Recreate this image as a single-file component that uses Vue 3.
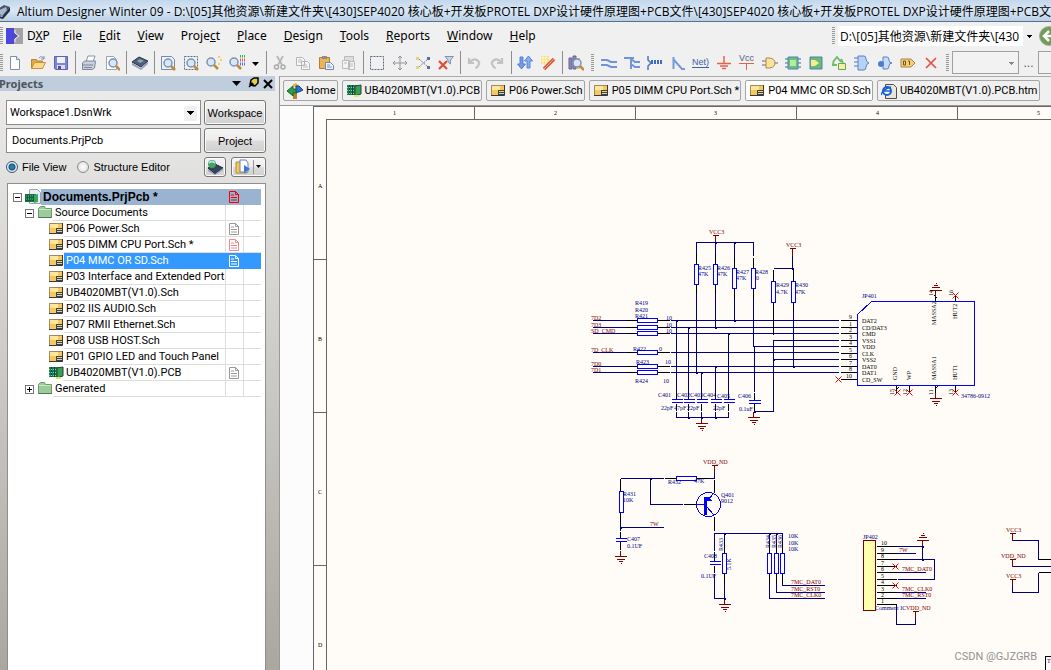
<script setup>
import { ref } from 'vue'

const title = 'Altium Designer Winter 09 - D:\\[05]其他资源\\新建文件夹\\[430]SEP4020 核心板+开发板PROTEL DXP设计硬件原理图+PCB文件\\[430]SEP4020 核心板+开发板PROTEL DXP设计硬件原理图+PCB文件'
const menus = [['D', 'X', 'P'], ['', 'F', 'ile'], ['', 'E', 'dit'], ['', 'V', 'iew'], ['Proje', 'c', 't'], ['', 'P', 'lace'], ['', 'D', 'esign'], ['', 'T', 'ools'], ['', 'R', 'eports'], ['', 'W', 'indow'], ['', 'H', 'elp']]

const lens = '<circle cx="7" cy="7" r="4" fill="#d5e7f8" stroke="#7e93b0" stroke-width="1.5"/><path d="M10 10l4 4" stroke="#c08a3c" stroke-width="2.5"/>'
const icons = {
  new: '<path d="M3.500 1.500h6l3 3v10h-9z" fill="#fff" stroke="#7d8fae"/><path d="M9.500 1.500v3h3" fill="#dfe7f3" stroke="#7d8fae"/>',
  open: '<path d="M1.500 13.500v-9h5l1 1.500h5v7.500z" fill="#e0a94a" stroke="#b98330"/><path d="M1.500 13.500l3-6h11l-3 6z" fill="#fad88c" stroke="#c8913b"/><path d="M9 3q3-3 5 1m0-3v3h-3" fill="none" stroke="#7590b8"/>',
  save: '<path d="M1.500 1.500h13v13h-12l-1-1z" fill="#7d86d8" stroke="#5b63b0"/><path d="M4 2h8v6H4z" fill="#eef0fa"/><path d="M4 10h8v4H4z" fill="#d8daf0"/><path d="M5 11h3v3H5z" fill="#4b559b"/>',
  print: '<path d="M5 7l2-6h7l-2 6z" fill="#fff" stroke="#8a93a6"/><path d="M1.500 8l2-2h11l-1 7-2 1.500h-10z" fill="#c9d0de" stroke="#7c869c"/><path d="M2 10h10M3 12.500h8" stroke="#7c869c"/>',
  preview: '<path d="M2.500 1.500h7l3 3v10h-10z" fill="#fff" stroke="#98a4b8"/><g transform="translate(2 1)">' + lens + '</g>',
  board: '<path d="M0 7l7-5 9 4-7 6z" fill="#4f5f76" stroke="#29374b"/><path d="M0 8v2l9 5 7-6V7l-7 6z" fill="#8ea0ba"/><path d="M5 6l3-2 4 2-4 2z" fill="#8ba4c4"/>',
  zoomdoc: '<path d="M1.500 1.500h10l3 3v10h-13z" fill="#edf3fa" stroke="#7589a9"/><g transform="translate(1 1)">' + lens + '</g>',
  zoomarea: '<path d="M1.500 1.500h13v13h-13z" fill="none" stroke="#5f6f8b" stroke-dasharray="2 1"/><g transform="translate(1 1)">' + lens + '</g>',
  zoomsel: '<g transform="translate(-2 0)">' + lens + '</g><path d="M12 1h2v2h-2zM14 4h2v2h-2zM12 8h2v2h-2z" fill="#ead55b"/>',
  zoomfilter: '<g transform="translate(-2 0)">' + lens + '</g><path d="M11 1h5" stroke="#30b050" stroke-width="3" stroke-dasharray="1 1"/><path d="M11 5h5" stroke="#e06060" stroke-width="3" stroke-dasharray="1 1"/><path d="M11 9h5" stroke="#6070e0" stroke-width="3" stroke-dasharray="1 1"/>',
  cut: '<path d="M5 1l5 9M11 1L6 10" stroke="#b5b5b5" stroke-width="1.700"/><circle cx="4.500" cy="12" r="2" fill="none" stroke="#aaa" stroke-width="1.500"/><circle cx="11" cy="12" r="2" fill="none" stroke="#aaa" stroke-width="1.500"/>',
  copy: '<path d="M1.500 2.500h6l2 2v6h-8zM6.500 6.500h6l2 2v6h-8z" fill="#f7f7f7" stroke="#b5b5b5"/><path d="M3 5h4M3 7h3M8 10h4M8 12h5" stroke="#bbb"/>',
  paste: '<path d="M1.500 2.500h10v11h-10z" fill="#e9b652" stroke="#b07f2d"/><path d="M4 1h5v3H4z" fill="#8c8c94"/><path d="M7.500 7.500h5l3 3v4h-8z" fill="#f1f5fc" stroke="#6d86b4"/><path d="M9 10h3M9 12h5" stroke="#7a93be"/>',
  paste2: '<path d="M3.500 1.500h9v10h-9z" fill="#ddd" stroke="#bbb"/><path d="M1.500 5.500h7v8h-7zM7.500 6.500h6v8h-6z" fill="#f4f4f4" stroke="#bbb"/><path d="M9 9h3M9 11h3M3 8h3" stroke="#bbb"/>',
  select: '<path d="M1.500 1.500h13v13h-13z" fill="none" stroke="#5c6880" stroke-dasharray="2 1"/>',
  move: '<path d="M8 1v14M1 8h14M6 3l2-2 2 2M6 13l2 2 2-2M3 6L1 8l2 2M13 6l2 2-2 2" fill="none" stroke="#8e96a3"/>',
  wires: '<path d="M4 4l9 8M4 12l9-8" stroke="#7381a0" stroke-dasharray="2 1"/><path d="M1 2h3v3H1zM1 11h3v3H1z" fill="#e2d678"/><path d="M12 2h3v3h-3zM12 11h3v3h-3z" fill="#5b6f98"/>',
  clear: '<path d="M1 6l8 8M9 6l-8 8" stroke="#e04c35" stroke-width="2.200"/><path d="M7 1.500h8.500L12.500 5v4L10 7V5z" fill="#c7d4e8" stroke="#7f93b4"/>',
  undo: '<path d="M3 3v5h5M3.500 7.500q4-5 8-2t-2 8" fill="none" stroke="#c2c2c2" stroke-width="2.200"/>',
  redo: '<path d="M13 3v5H8M12.500 7.500q-4-5-8-2t2 8" fill="none" stroke="#c2c2c2" stroke-width="2.200"/>',
  updown: '<path d="M3 2h3v7h2.500l-4 5-4-5H3z" fill="#6f9bea" stroke="#5a80d0"/><path d="M10 13h3V6h2.500l-4-5-4 5H10z" fill="#86b0f3" stroke="#5a80d0"/>',
  wand: '<path d="M1 1h8v8H1z" fill="#f8dc82"/><path d="M1 3h8M1 6h8M3 1v8M6 1v8" stroke="#fff6cc"/><path d="M4 14L14 4" stroke="#d5593c" stroke-width="3.500"/><path d="M4 14L14 4" stroke="#f6a184"/>',
  browse: '<path d="M1 3h3v11H1zM5 1h3v13H5z" fill="#8c84bd" stroke="#6a6296"/><path d="M9 3h3v11H9z" fill="#e6bd63"/><g transform="translate(2 1)">' + lens + '</g>',
  wire: '<path d="M0 5h6l4 2h6M0 10h6l4 2h6" fill="none" stroke="#6f94df" stroke-width="2"/>',
  bus: '<path d="M0 3h7M7 2v12M7 4l4 3h5M7 9l4 3h5M5 3h5" fill="none" stroke="#6f94df" stroke-width="2"/>',
  harness: '<path d="M1 1v4l3 3-3 3v4" fill="none" stroke="#4a75c0" stroke-width="1.500"/><path d="M4 8h12M4 6h12" stroke="#3d6cc8" stroke-width="2" stroke-dasharray="2 1"/>',
  entry: '<path d="M3.500 2v12M4 5l8 9h3" fill="none" stroke="#7499dd" stroke-width="2"/>',
  gnd: '<path d="M8 1v7M1 8.500h14M4 11h8M6 13.500h4" stroke="#e4624c" stroke-width="1.500"/>',
  gate: '<path d="M0 6h4M0 10h4M12 8h4" stroke="#5f6e87"/><path d="M4 3h4q5 1 5 5t-5 5H4z" fill="#ffe29a" stroke="#a9884a"/>',
  chip: '<path d="M0 4h3M0 8h3M0 12h3M13 4h3M13 8h3M13 12h3" stroke="#3d6a9c"/><path d="M3 2h10v12H3z" fill="#6bbf78" stroke="#4f80bd"/><path d="M5 5h6v6H5z" fill="#b5ec9d"/>',
  sheet: '<path d="M2 2h12v12H2z" fill="#6dba78" stroke="#4f80b0"/><path d="M3 5h4l4 3-4 3H3z" fill="#f4ee91"/>',
  device: '<path d="M2 7l4-5 4 5M10 4l2 4M1 10h5M2 7l1 4" fill="none" stroke="#70bd6b" stroke-width="2"/><path d="M7.500 8.500h7v6h-7z" fill="#f6f09a" stroke="#62a65f"/>',
  hconn: '<path d="M0 3h6M0 7h6M0 11h6" stroke="#4c78bd"/><path d="M6 1h4q2 0 2 3t3 4q-3 1-3 4t-2 3H4V1z" fill="#b6d2f6" stroke="#5c82bc"/>',
  hentry: '<path d="M6 2h4q2 0 2 3t3 3q-3 0-3 3t-2 3H6z" fill="#c6dcf8" stroke="#5c82bc"/><circle cx="4" cy="9" r="3" fill="#4d7bdc"/>',
  port: '<path d="M1 4h10l4 4-4 4H1z" fill="#f7ce78" stroke="#a98544"/><path d="M3.500 6h2v4h-2zM8 6h1.500v4" fill="none" stroke="#6d5428"/>',
  noerc: '<path d="M3 3l10 10M13 3L3 13" stroke="#e55242" stroke-width="1.700"/>',
  sch: '<path d="M1 2h14v11H1z" fill="#f6c95a"/><path d="M2 3h8v4H2z" fill="#fde79e"/><path d="M1.500 13V2.500h13" fill="none" stroke="#a08a58"/><path d="M14.500 2v10.500H1" fill="none" stroke="#3b3540"/><path d="M8 7h6v5H8z" fill="#34435c"/><path d="M9 8.500h5M9 10.500h5" stroke="#f6d36f"/>',
  pcb: '<path d="M1 2h10v10H1z" fill="#1f7a50"/><path d="M3.500 2v10M6.500 2v10" stroke="#123f3a"/><path d="M1 4.500h10M1 7.500h10M1 10.500h10" stroke="#7fd89b" stroke-dasharray="1 1"/><path d="M9 3l6-1v9l-6 2z" fill="#3f9b58" stroke="#174d2f"/><path d="M8 12h5v2H8z" fill="#d7ee5c"/>',
  project: '<path d="M4.500.5h8l3 3v11h-11z" fill="#e8eef7" stroke="#96a4ba"/><path d="M0 5h11v8H0z" fill="#167044"/><path d="M2 6v6M5 6v6M8 6v6" stroke="#0a3d31"/><path d="M1 7h9M1 10h9" stroke="#6ed28c" stroke-dasharray="1 1"/><path d="M9 6l4-1v8l-4 1z" fill="#3fa55a"/>',
  folder: '<path d="M1.500 12.500v-9l2-2h4l1 2h6v9z" fill="#9dcc9a" stroke="#6b9a6b"/><path d="M2 4.500h12" stroke="#c9e8c4"/><path d="M1 12.500h14" stroke="#4e7a50"/>',
  home: '<path d="M6 7h4v9H6z" fill="#b98224"/><path d="M0 8l6-5v3h4v4H6v3z" fill="#2c9b4a" stroke="#17672c"/><path d="M5 2l4-2 3 3-3 2z" fill="#e6b133"/><path d="M16 7l-4-4H9v6h3z" fill="#2c72c9" stroke="#174689"/>',
  html: '<path d="M4.500 1.500h8l3 3v11h-11z" fill="#e9e6d8" stroke="#504e48"/><circle cx="6" cy="8" r="4" fill="#fff" stroke="#1862cf" stroke-width="2"/><path d="M3 8h7M0 12q2-6 10-8" stroke="#1862cf" stroke-width="1.500" fill="none"/>',
  doc: '<path d="M3.500 2.500h6l3 3v8h-9zM9.500 2.500v3h3M5 6h3M5 8.500h6M5 11h6" fill="none" stroke="currentColor"/>',
  refresh: '<path d="M1 9l7-4 8 4-8 6z" fill="#33465c" stroke="#1d2838"/><path d="M1 10v2l7 4 8-5V9l-8 6z" fill="#8fa4bb"/><circle cx="5" cy="5" r="4" fill="#49a05b"/><path d="M2 4q3-3 6 0" stroke="#b5e1f7" stroke-width="2" fill="none"/>',
  folderview: '<path d="M1 3h5l1 2h5v9H1z" fill="#f5c658" stroke="#b98c37"/><path d="M5 1h6l2 3v9H5z" fill="#fff" stroke="#6785bd"/><path d="M9 6l6 4-6 4z" fill="#3a75d8"/>'
}

const bar = ['new', 'open', 'save', '|', 'print', 'preview', '|', 'board', '|', 'zoomdoc', 'zoomarea', 'zoomsel', 'zoomfilter', 'v', '|', 'cut', 'copy', 'paste', 'paste2', '|', 'select', 'move', 'wires', 'clear', '|', 'undo', 'redo', '|', 'updown', 'wand', '|', 'browse', ':', 'wire', 'bus', 'harness', 'entry', 'net', 'gnd', 'vcc', 'gate', 'chip', 'sheet', 'device', 'hconn', 'hentry', 'port', 'noerc', ':']

const view = ref('file')
const tabs = [
  ['home', 'Home'], ['pcb', 'UB4020MBT(V1.0).PCB'], ['sch', 'P06 Power.Sch'], ['sch', 'P05 DIMM CPU Port.Sch *'],
  ['sch', 'P04 MMC OR SD.Sch'], ['html', 'UB4020MBT(V1.0).PCB.htm']
]
const rows = [
  { t: 'Documents.PrjPcb *', i: 'project', l: 0, box: '-', mark: 'red', cls: 'root' },
  { t: 'Source Documents', i: 'folder', l: 1, box: '-' },
  { t: 'P06 Power.Sch', i: 'sch', l: 2, mark: 'gray' },
  { t: 'P05 DIMM CPU Port.Sch *', i: 'sch', l: 2, mark: 'pink' },
  { t: 'P04 MMC OR SD.Sch', i: 'sch', l: 2, mark: 'light', cls: 'active' },
  { t: 'P03 Interface and Extended Port.', i: 'sch', l: 2 },
  { t: 'UB4020MBT(V1.0).Sch', i: 'sch', l: 2 },
  { t: 'P02 IIS AUDIO.Sch', i: 'sch', l: 2 },
  { t: 'P07 RMII Ethernet.Sch', i: 'sch', l: 2 },
  { t: 'P08 USB HOST.Sch', i: 'sch', l: 2 },
  { t: 'P01 GPIO LED and Touch Panel', i: 'sch', l: 2 },
  { t: 'UB4020MBT(V1.0).PCB', i: 'pcb', l: 2, mark: 'gray' },
  { t: 'Generated', i: 'folder', l: 1, box: '+' }
]

/* Schematic geometry, in sheet units */
const wires = 'M696 253V242H753V255M715 242V253M734 242V257M696 293V372M715 293V327M734 298V320M753 298V346H838M792 255V268M773 268H793M793 311V366' +
  'M592 320H626M592 327H626M592 333H626M592 352H626M592 366H626M592 372H626M670 320H838M670 327H838M670 333H838M670 352H838M670 366H838M670 372H838' +
  'M676 320V392M688 327V392M701 372V392M715 366V392M728 333V392M676 411V417H728V411M688 411V417M701 411V417M715 411V417M754 346V391M754 411H773V340H838M773 359H838' +
  'M663 478H620M650 478V504H682M708 478H714V472M620 522V530M620 527H663M714 550V533H782V541M724 533V542M714 573V598H724V583M769 533V542M776 533V542' +
  'M769 583V598H824M776 583V592H824M782 583V585H824' +
  'M896 546H922V559M896 553H915M896 559H934V579H897M896 572H925M896 592H925M896 598H925M896 604V624H915V618M1012 540H1038V559M1012 566H1400M1012 585V592H1038V572'
const pins = 'M696 253V264M696 284V293M715 253V264M715 284V293M734 257V268M734 288V298M753 257V268M753 288V298M773 269V281M773 302V334M793 269V281M793 302V311' +
  [320, 327, 333, 352, 366, 372].map(y => `M626 ${y}H637M657 ${y}H669`).join('') +
  [676, 688, 701, 715, 728].map(x => `M${x} 392V399M${x} 403V410`).join('') +
  [320, 327, 333, 340, 346, 353, 359, 366, 372, 379].map(y => `M840 ${y}H857`).join('') +
  [546, 553, 559, 566, 572, 579, 585, 592, 598, 604].map(y => `M876 ${y}H896`).join('') +
  'M754 392V400M754 403V411M935 293V301M955 295V301M896 385V392M909 385V392M935 385V393M955 385V392M934 295l3 3M934 389l3-3M895 390l3-3' +
  'M620 478V491M620 512V522M620 531V538M620 541V549M664 478H676M696 478H708M683 504H695M714 479V492M714 516V530M714 551V561M714 565V572M724 542V553M724 573V583M769 542V553M776 542V553M782 541V553M769 573V583M776 573V583M782 573V583' +
  'M1038 559H1400M1038 572H1400M1045 1000V656H1400'
const parts = 'M694 264h4v20h-4zM713 264h4v20h-4zM732 268h4v20h-4zM751 268h4v20h-4zM771 281h4v21h-4zM791 281h4v21h-4z' +
  [320, 327, 333, 352, 366, 372].map(y => `M637 ${y - 2}h20v4h-20z`).join('') +
  [671, 683, 696, 710, 723].map(x => `M${x} 399h11M${x} 402h11`).join('') +
  'M748 400h12M748 403h12M871 301H974V385H857V314zM676 476h20v4h-20zM619 491h4v21h-4zM615 538h11M615 541h11M695 504h8M709 561h11M709 564h11M722 553h4v20h-4zM767 553h4v20h-4zM774 553h4v20h-4zM780 553h4v20h-4z'
const bodies = parts.match(/M[^M]*z/g).filter(p => !p.includes('H')).join('')
const gnd = (x, y, s = 1) => `M${x} ${y - s * 6}V${y}M${x - 6} ${y}h12M${x - 4} ${y + s * 3}h8M${x - 2} ${y + s * 5}h4M${x} ${y + s * 7}h1`
const vcc = (x, y, h) => `M${x - 3} ${y}h6M${x} ${y}v${h}`
const power = gnd(701, 423) + gnd(753, 417) + gnd(935, 290, -1) + gnd(935, 398) + gnd(620, 556) + gnd(724, 604) + gnd(922, 540, -1) +
  vcc(715, 235, 7) + vcc(792, 248, 7) + vcc(714, 465, 7) + vcc(1012, 533, 7) + vcc(1012, 559, 7) + vcc(1012, 579, 6) + vcc(915, 611, 7)
const crosses = [[838, 379], [955, 295], [897, 392], [909, 392], [955, 392], [895, 566], [895, 585]].map(([x, y]) => `M${x - 3} ${y - 3}l6 6M${x + 3} ${y - 3}l-6 6`).join('')
const dots = [[715, 242], [734, 242], [676, 320], [688, 327], [715, 327], [734, 320], [728, 333], [696, 372], [701, 372], [715, 366], [792, 268], [793, 366], [773, 359], [688, 417], [701, 417], [715, 417], [754, 411], [650, 478], [620, 527], [724, 533], [769, 533], [776, 533], [724, 598], [922, 546], [922, 559]]

const R = 'r', B = 'b', K = 'k'
const labels = [
  [709, 234, 'VCC3', R], [786, 247, 'VCC3', R], [698, 270, 'R425', B], [698, 276, '47K', B], [717, 270, 'R426', B], [717, 276, '47K', B],
  [736, 274, 'R427', B], [736, 280, '47K', B], [755, 274, 'R428', B], [756, 280, '0', B], [776, 287, 'R429', B], [776, 294, '4.7K', B], [795, 287, 'R430', B], [795, 294, '47K', B],
  [635, 305, 'R419', B], [635, 312, 'R420', B], [635, 318, 'R421', B], [633, 351, 'R422', B], [636, 364, 'R423', B], [635, 383, 'R424', B],
  [666, 320, '10', B], [666, 327, '10', B], [666, 333, '10', B], [659, 351, '0', B], [665, 364, '10', B], [663, 383, '10', B],
  [591, 320, '7D2', R], [591, 327, '7D3', R], [591, 333, 'SD_CMD', R], [591, 352, '7D_CLK', R], [591, 366, '7D0', R], [591, 372, '7D1', R],
  [658, 397, 'C401', B], [677, 397, 'C402', B], [690, 397, 'C403', B], [703, 397, 'C404', B], [717, 398, 'C405', B], [738, 398, 'C406', B],
  [661, 410, '22pF', B], [674, 410, '47pF', B], [687, 410, '22pF', B], [713, 410, '22pF', B], [739, 411, '0.1uF', B],
  [862, 298, 'JP401', B], [961, 398, '34786-0912', B],
  ...['DAT2', 'CD/DAT3', 'CMD', 'VSS1', 'VDD', 'CLK', 'VSS2', 'DAT0', 'DAT1', 'CD_SW'].map((t, i) => [862, [323, 330, 336, 343, 349, 356, 362, 369, 375, 382][i], t, K]),
  ...['9', '1', '2', '3', '4', '5', '6', '7', '8', '10'].map((t, i) => [t === '10' ? 846 : 849, [320, 327, 333, 340, 346, 353, 359, 366, 372, 379][i] - 1, t, K]),
  [936, 325, 'MASSA2', K, 1], [957, 319, 'HUT2', K, 1], [897, 380, 'GND', K, 1], [911, 380, 'WP', K, 1], [936, 380, 'MASSA1', K, 1], [957, 380, 'HUT1', K, 1],
  [933, 296, '14', K, 1], [953, 296, '16', K, 1], [894, 395, '15', K, 1], [907, 395, '12', K, 1], [933, 395, '11', K, 1], [953, 395, '13', K, 1],
  [703, 464, 'VDD_ND', R], [668, 484, 'R432', B], [694, 483, '47K', B], [721, 497, 'Q401', B], [721, 503, '9012', B], [623, 496, 'R431', B], [623, 502, '10K', B],
  [650, 526, '7W', R], [627, 541, 'C407', B], [627, 548, '0.1UF', B], [704, 558, 'C408', B], [701, 578, '0.1UF', B],
  [723, 551, 'R433', B, 1], [731, 570, '5.1K', B, 1], [770, 548, 'R434', B, 1], [776, 548, 'R435', B, 1], [782, 548, 'R436', B, 1],
  [788, 538, '10K', B], [788, 545, '10K', B], [788, 551, '10K', B], [791, 584, '7MC_DAT0', R], [791, 591, '7MC_RST0', R], [791, 597, '7MC_CLK0', R],
  [863, 539, 'JP402', B], ...[10, 9, 8, 7, 6, 5, 4, 3, 2, 1].map((t, i) => [881, [545, 552, 558, 565, 571, 578, 584, 591, 597, 603][i], t, K]),
  [899, 552, '7W', R], [902, 571, '7MC_DAT0', R], [902, 591, '7MC_CLK0', R], [902, 597, '7MC_RST0', R], [875, 610, 'Comment IC', B], [906, 610, 'VDD_ND', R],
  [1006, 532, 'VCC3', R], [1001, 558, 'VDD_ND', R], [1006, 578, 'VCC3', R], [1047, 663, 'T', B],
  [393, 115, '1', K], [554, 115, '2', K], [714, 115, '3', K], [876, 115, '4', K], [1037, 115, '5', K],
  [318, 188, 'A', K], [318, 341, 'B', K], [318, 494, 'C', K], [318, 647, 'D', K]
]
</script>

<template>
  <div class="app">
    <header class="title">
      <svg class="ic" viewBox="0 0 16 16" aria-hidden="true"><path d="M0 7l8-5 6 2-7 9-7-1z" fill="#4b5566" /><path d="M1 8l9-4 1 3-5 6z" fill="#a5b6ce" /><path d="M0 12l6 2 8-10v4l-7 8-7-2z" fill="#222c3d" /></svg>
      <span>{{ title }}</span>
    </header>

    <nav class="menu">
      <i class="grip"></i>
      <svg class="dxp" viewBox="0 0 18 16" aria-hidden="true"><path d="M0 0h8v16H0z" fill="#4c47dc" /><path d="M8 0h9v16H8z" fill="#a3a3a3" /><path d="M7 4l5 4-5 4z" fill="#4c47dc" /><path d="M9 2v3l4 3-4 3v3" fill="none" stroke="#ececec" /></svg>
      <button v-for="m in menus" :key="m.join('')" class="mi">{{ m[0] }}<u>{{ m[1] }}</u>{{ m[2] }}</button>
      <span class="fill"></span>
      <i class="grip"></i>
      <select class="path" aria-label="Document path"><option>D:\[05]其他资源\新建文件夹\[430</option></select>
      <button class="back" aria-label="Back"><svg width="22" height="22" viewBox="0 0 22 22"><circle cx="11" cy="11" r="9.500" fill="#719e55" stroke="#aaa" /><path d="M11 6l-5 5 5 5M6 11h10" stroke="#fff" stroke-width="2.500" fill="none" /></svg></button>
    </nav>

    <div class="tools">
      <template v-for="(b, n) in bar" :key="n">
        <i v-if="b === '|'" class="sep"></i>
        <i v-else-if="b === ':'" class="grip wide"></i>
        <button v-else-if="b === 'v'" class="caret" aria-label="Zoom options"><svg width="8" height="5"><path d="M0 0h7L3.500 4z" /></svg></button>
        <button v-else-if="b === 'net'" class="tb"><span class="net">Net)</span></button>
        <button v-else-if="b === 'vcc'" class="tb"><span class="vcc">Vcc</span></button>
        <button v-else class="tb" :aria-label="b"><svg class="ic" viewBox="0 0 16 16" v-html="icons[b]"></svg></button>
      </template>
      <select class="combo" aria-label="Style" disabled><option></option></select>
      <button class="more">...</button>
      <select class="combo last" aria-label="Font" disabled><option></option></select>
    </div>

    <main class="main">
      <aside class="panel">
        <h2 class="phead"><span>Projects</span>
          <svg width="44" height="14" viewBox="0 0 44 14" aria-hidden="true"><path d="M1 4h9l-4.500 5z" /><path d="M18 10l4-4M20 3l3-2h4v5l-3 3-5-1z" stroke="#000" fill="#e6cd55" stroke-width="1.500" /><path d="M20 6l3 3" stroke="#000" stroke-width="2" /><path d="M33 3l8 8M41 3l-8 8" stroke="#000" stroke-width="2" /></svg>
        </h2>
        <div class="form">
          <select class="field ws" aria-label="Workspace"><option>Workspace1.DsnWrk</option></select>
          <button class="btn">Workspace</button>
          <input class="field" aria-label="Project" value="Documents.PrjPcb">
          <button class="btn">Project</button>
          <div class="radios">
            <label><input v-model="view" type="radio" value="file"> File View</label>
            <label><input v-model="view" type="radio" value="structure"> Structure Editor</label>
          </div>
          <div class="pair">
            <button class="btn sm" aria-label="Refresh"><svg class="ic" viewBox="0 0 16 16" v-html="icons.refresh"></svg></button>
            <button class="btn sm grow" aria-label="Display options"><svg class="ic" viewBox="0 0 16 16" v-html="icons.folderview"></svg><i></i><svg width="6" height="4"><path d="M0 0h5L2.500 3z" /></svg></button>
          </div>
        </div>
        <ul class="tree">
          <li v-for="r in rows" :key="r.t" :class="['row', 'l' + r.l, r.cls]">
            <button v-if="r.box" class="box" :aria-label="r.box === '+' ? 'Expand' : 'Collapse'"><svg width="9" height="9"><path :d="r.box === '+' ? 'M2 4.500h5M4.500 2v5' : 'M2 4.500h5'" stroke="#000" /></svg></button>
            <svg class="ic" viewBox="0 0 16 16" v-html="icons[r.i]"></svg>
            <span class="name">{{ r.t }}</span>
            <span :class="['cell', r.mark]"><svg v-if="r.mark" class="ic" viewBox="0 0 16 16" v-html="icons.doc"></svg></span>
            <span class="cell"></span>
          </li>
        </ul>
      </aside>

      <section class="work">
        <div class="tabs">
          <button v-for="(t, n) in tabs" :key="t[1]" :class="['tab', { on: n === 4 }]"><svg class="ic" viewBox="0 0 16 16" v-html="icons[t[0]]"></svg>{{ t[1] }}</button>
        </div>
        <div class="canvas">
          <svg class="sheet" role="img" aria-label="Schematic sheet">
            <g transform="translate(-279.500 -105.500)" shape-rendering="crispEdges" fill="none">
              <path d="M313 106H3000V3000H313z" fill="#fffcf7" />
              <path d="M3000 106H313V3000M3000 119H326V3000M474 106v13M635 106v13M796 106v13M957 106v13M313 259h13M313 412h13M313 565h13" stroke="#666" />
              <path d="M863 540h12v70h-12z" fill="#ffffb0" stroke="#800000" />
              <path :d="wires" stroke="#000080" />
              <path :d="pins" stroke="#000" />
              <path :d="parts" stroke="#00f" />
              <path :d="bodies" fill="#fffcf7" stroke="#00f" />
              <circle cx="708" cy="504" r="12" stroke="#00f" />
              <path d="M703 496h3v18h-3z" fill="#00f" />
              <path d="M706 501l8-9M706 506l8 9" stroke="#00f" />
              <path d="M706 501l1-5 4 4z" fill="#00f" />
              <path :d="power" stroke="#800000" />
              <rect v-for="d in dots" :key="d.join()" :x="d[0] - 1" :y="d[1] - 1" width="2" height="2" fill="#000080" />
              <path :d="crosses" stroke="#f00" shape-rendering="auto" />
            </g>
            <g transform="translate(-280 -106)">
              <text v-for="(l, n) in labels" :key="n" :class="['lb', l[3]]" :transform="`translate(${l[0]} ${l[1]})` + (l[4] ? ' rotate(-90)' : '')">{{ l[2] }}</text>
            </g>
          </svg>
          <span class="mark">CSDN @GJZGRB</span>
        </div>
      </section>
    </main>
  </div>
</template>

<style>
body { margin: 0; }
</style>

<style scoped>
* { box-sizing: border-box; }
.app { display: flex; flex-direction: column; height: 100vh; overflow: hidden; background: #f0f0f0; color: #000; font: 11px "Liberation Sans", "Noto Sans CJK SC", sans-serif; }
button, select, input { font: inherit; color: inherit; }
button { border: 0; background: none; padding: 0; white-space: nowrap; }
select { appearance: none; border-radius: 0; }
.ic { width: 16px; height: 16px; flex: none; display: block; }
.title { display: flex; align-items: center; gap: 5px; height: 22px; flex: none; overflow: hidden; white-space: nowrap; border-bottom: 1px solid #5d6f85; background: linear-gradient(#c3d7ec, #d9e7f5 50%, #b9cfe6); font: 12px "Open Sans", "Noto Sans CJK SC", sans-serif; }
.title .ic { margin-left: -4px; }
.menu { display: flex; align-items: center; height: 28px; flex: none; font: 12px "Noto Sans", "Noto Sans CJK SC", sans-serif; }
.grip { width: 3px; height: 18px; flex: none; background: repeating-linear-gradient(#999 0 1px, #f0f0f0 1px 2px); }
.dxp { width: 18px; height: 16px; margin: 0 3px 0 3px; flex: none; }
.mi { margin-right: 17px; line-height: 20px; }
.mi:first-of-type { margin-right: 13px; }
.fill { flex: 1; }
.path { width: 196px; height: 20px; margin-left: 3px; padding: 0 14px 0 2px; border: 0; font-family: "Open Sans", "Noto Sans CJK SC", sans-serif; background: linear-gradient(#000, #000) 189px 9px / 5px 1px no-repeat, linear-gradient(#000, #000) 190px 10px / 3px 1px no-repeat, linear-gradient(#000, #000) 191px 11px / 1px 1px no-repeat, linear-gradient(90deg, #fff 185px, #f0f0f0 185px); overflow: hidden; }
.back { width: 13px; height: 22px; overflow: hidden; margin-left: 4px; flex: none; }
.tools { display: flex; align-items: center; height: 26px; flex: none; overflow: hidden; padding-bottom: 1px; }
.tools::before { content: ""; width: 3px; height: 18px; flex: none; background: repeating-linear-gradient(#999 0 1px, #f0f0f0 1px 2px); }
.tb { width: 23px; height: 22px; flex: none; display: flex; align-items: center; justify-content: center; }
.sep { width: 5px; height: 23px; flex: none; background: linear-gradient(#8d8d8d, #8d8d8d) 3px 0 / 1px 100% no-repeat; }
.grip.wide { margin: 0 3px 0 4px; }
.caret { width: 15px; flex: none; }
.net { font-size: 9px; color: #3f62a8; border-bottom: 1px solid #3f62a8; line-height: 9px; }
.vcc { font-size: 9px; line-height: 8px; color: #53637f; border-bottom: 1px solid #e4624c; padding-bottom: 1px; margin-bottom: 7px; position: relative; }
.vcc::after { content: ""; position: absolute; left: 50%; top: 100%; width: 1px; height: 7px; background: #e4624c; }
.combo { width: 67px; height: 23px; flex: none; border: 1px solid #a0a0a0; opacity: 1; background: linear-gradient(#888, #888) 56px 10px / 5px 1px no-repeat, linear-gradient(#888, #888) 57px 11px / 3px 1px no-repeat, linear-gradient(#888, #888) 58px 12px / 1px 1px no-repeat, #f2f2f2; }
.more { width: 19px; flex: none; font-size: 12px; color: #555; }
.main { flex: 1; display: flex; min-height: 0; }
.panel { width: 280px; flex: none; display: flex; flex-direction: column; border-right: 1px solid #999; background: linear-gradient(#ededec, #d6d5d2 200px, #aaa79e); }
.phead { display: flex; align-items: center; justify-content: space-between; height: 15px; margin: 0 4px 9px 0; background: #bfcddc; font: bold 11px "Noto Sans", sans-serif; color: #4e5358; overflow: hidden; flex: none; }
.phead span { margin-left: -1px; }
.form { display: grid; grid-template-columns: 1fr 62px; gap: 3px; padding: 0 13px 5px 6px; }
.field { height: 25px; width: 100%; border: 1px solid #8c8c8c; background-color: #fff; padding: 0 5px; font: 11px Roboto, sans-serif; }
.ws { padding: 0 3px; background: linear-gradient(#000, #000) 180px 10px / 7px 1px no-repeat, linear-gradient(#000, #000) 181px 11px / 5px 1px no-repeat, linear-gradient(#000, #000) 182px 12px / 3px 1px no-repeat, linear-gradient(#000, #000) 183px 13px / 1px 1px no-repeat, linear-gradient(#f0f0f0, #f0f0f0) 177px 5px / 13px 15px no-repeat, #fff; }
.btn { height: 25px; border: 1px solid #777; border-radius: 3px; background: linear-gradient(#f4f4f4, #ececec 48%, #dcdcdc 52%, #d0d0d0); box-shadow: inset 0 0 0 1px #fafafa; }
.radios { display: flex; align-items: center; gap: 11px; height: 22px; }
.radios label { display: flex; align-items: center; gap: 4px; white-space: nowrap; }
.radios input { appearance: none; width: 12px; height: 12px; margin: 0; border: 1px solid #8a8a8a; border-radius: 50%; background: radial-gradient(#fff, #d8d8d8); }
.radios input:checked { border-color: #3a5870; background: radial-gradient(#1d83b5 0 2px, #174a6c 3px, #e6eef3 4px); }
.pair { display: flex; gap: 5px; align-items: center; }
.sm { width: 22px; height: 20px; display: flex; align-items: center; justify-content: center; }
.sm.grow { flex: 1; gap: 2px; }
.sm i { width: 1px; height: 14px; background: #999; }
.tree { flex: 1; list-style: none; margin: 0 13px 0 7px; padding: 5px 4px 0 4px; border: 1px solid #8e8e8e; border-bottom: 0; background: #fff; overflow: hidden; font: 11px Roboto, sans-serif; }
.row { display: flex; align-items: center; height: 16px; white-space: nowrap; }
.l1 { padding-left: 12px; }
.l2 { padding-left: 36px; }
.box { width: 9px; height: 9px; outline: 1px solid #777; outline-offset: -1px; margin: 0 3px 0 1px; flex: none; display: flex; }
.name { flex: 1; min-width: 0; height: 16px; line-height: 16px; padding-left: 2px; overflow: hidden; border-bottom: 1px solid #ddd; }
.cell { width: 18px; height: 16px; flex: none; border-left: 1px solid #ddd; border-bottom: 1px solid #ddd; color: #999; }
.cell.red { color: #e00; }
.cell.pink { color: #f28a8a; }
.root .name { font: bold 12px/16px "Liberation Sans", sans-serif; }
.root .name, .root .cell { background: #9ab3d0; border-color: #9ab3d0; }
.active .name, .active .cell { background: #3399ff; border-color: #3399ff; color: #fff; }
.work { flex: 1; min-width: 0; display: flex; flex-direction: column; }
.tabs { display: flex; gap: 4px; height: 30px; flex: none; padding: 3px 3px 4px; border-top: 1px solid #aaa; border-bottom: 1px solid #999; overflow: hidden; }
.tab { display: flex; align-items: center; gap: 3px; padding: 0 1px 0 3px; border: 1px solid #a5a5a5; border-radius: 2px; flex: none; font-family: Roboto, sans-serif; }
.tab.on { background: #fff; }
.canvas { flex: 1; min-height: 0; position: relative; background: #fcfcfc; overflow: hidden; }
.sheet { width: 100%; height: 100%; display: block; }
.lb { font: 6px "Liberation Serif", serif; }
.r { fill: #800000; }
.b { fill: #000080; }
.k { fill: #000; }
.mark { position: absolute; right: 14px; bottom: 7px; font: 11px Roboto, sans-serif; color: #929292; }
</style>
